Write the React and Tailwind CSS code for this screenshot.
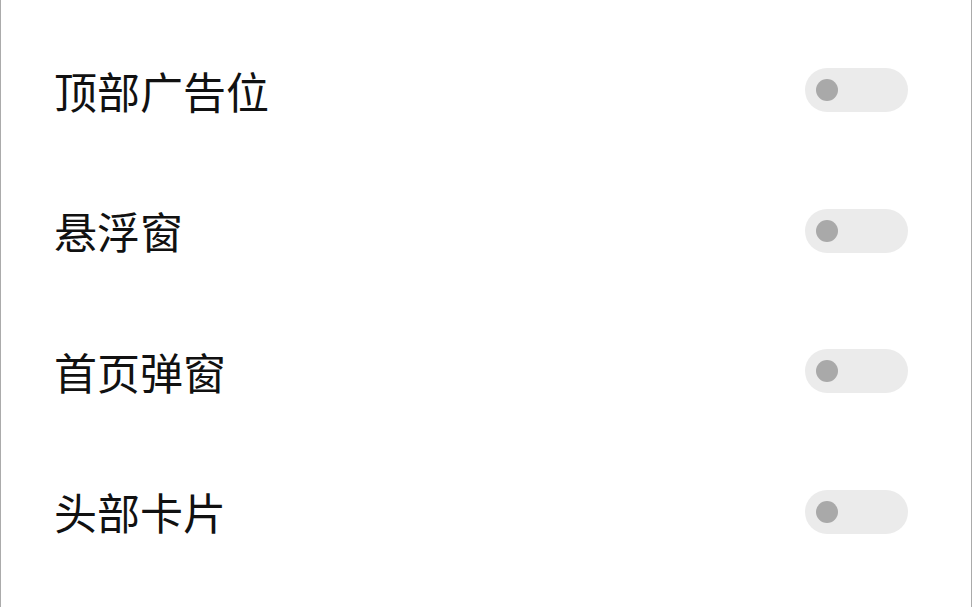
import React, { useState } from 'react';

const ITEMS = ['顶部广告位', '悬浮窗', '首页弹窗', '头部卡片'];

function Toggle({ on, onClick }) {
  return (
    <button
      onClick={onClick}
      className={`w-[103px] h-[44px] rounded-full flex items-center px-[11px] ${on ? 'bg-[#4a90e2] justify-end' : 'bg-[#ebebeb] justify-start'}`}
    >
      <span className={`block w-[22px] h-[22px] rounded-full ${on ? 'bg-white' : 'bg-[#a9a9a9]'}`} />
    </button>
  );
}

export default function App() {
  const [state, setState] = useState(ITEMS.map(() => false));

  return (
    <div className="w-[972px] h-[607px] bg-white border-l border-r border-[#ababab] pt-[20px] overflow-hidden" style={{ fontFamily: '"Noto Sans CJK SC", "Noto Sans", sans-serif' }}>
      {ITEMS.map((label, i) => (
        <div key={label} className="h-[140.5px] flex items-center justify-between pl-[53px] pr-[63px]">
          <span className="text-[43px] leading-none text-[#111111]">{label}</span>
          <Toggle on={state[i]} onClick={() => setState(s => s.map((v, j) => (j === i ? !v : v)))} />
        </div>
      ))}
    </div>
  );
}
